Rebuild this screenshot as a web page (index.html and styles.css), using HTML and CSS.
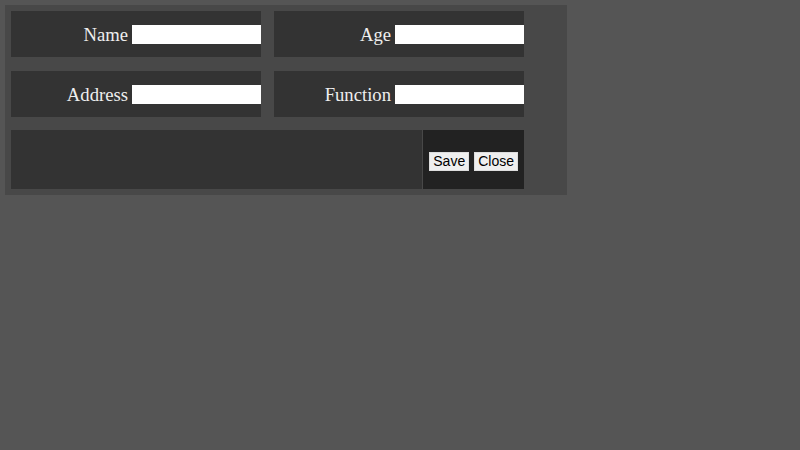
FILE: index.html
```html
<!DOCTYPE html>
<html lang="en">
<head>
    <meta charset="UTF-8">
    <meta name="viewport" content="width=device-width, initial-scale=1.0">
    <title>Person form</title>
    <link rel="stylesheet" href="styles.css">
</head>
<body>
    <div class="panel">
        <div class="row">
            <div class="field">
                <label for="name">Name</label>
                <input type="text" id="name">
            </div>
            <div class="field">
                <label for="age">Age</label>
                <input type="text" id="age">
            </div>
        </div>
        <div class="row">
            <div class="field">
                <label for="address">Address</label>
                <input type="text" id="address">
            </div>
            <div class="field">
                <label for="function">Function</label>
                <input type="text" id="function">
            </div>
        </div>
        <div class="footer">
            <div class="message"></div>
            <div class="actions">
                <button class="button">Save</button>
                <button class="button">Close</button>
            </div>
        </div>
    </div>
</body>
</html>
```

FILE: styles.css
```css
body {
    margin: 5px;
    background-color: #555555;
    font-family: "Liberation Serif", "Times New Roman", serif;
}
.panel {
    width: 513px;
    padding: 6px 43px 6px 6px;
    background-color: #484848;
}
.row {
    display: flex;
    gap: 13px;
    margin-bottom: 14px;
}
.row + .row {
    margin-bottom: 13px;
}
.field {
    width: 250px;
    height: 46px;
    display: flex;
    align-items: center;
    justify-content: flex-end;
    gap: 4px;
    padding-top: 1px;
    box-sizing: border-box;
    background-color: #333333;
}
.field label {
    color: #eeeeee;
    font-size: 18.67px;
}
.field input {
    width: 129px;
    height: 19px;
    padding: 0 2px;
    border: none;
    box-sizing: border-box;
    background-color: #ffffff;
}
.footer {
    display: flex;
    height: 59px;
    gap: 1px;
}
.message {
    flex: 1;
    background-color: #333333;
}
.actions {
    display: flex;
    align-items: center;
    gap: 5px;
    padding: 3px 6px 0 6px;
    background-color: #222222;
}
.button {
    height: 19px;
    padding: 0 3px;
    font-family: "Liberation Sans", Arial, sans-serif;
    font-size: 14px;
    color: #000000;
    background-color: #efefef;
    border: 1px solid #dddddd;
    border-radius: 0;
}
```
